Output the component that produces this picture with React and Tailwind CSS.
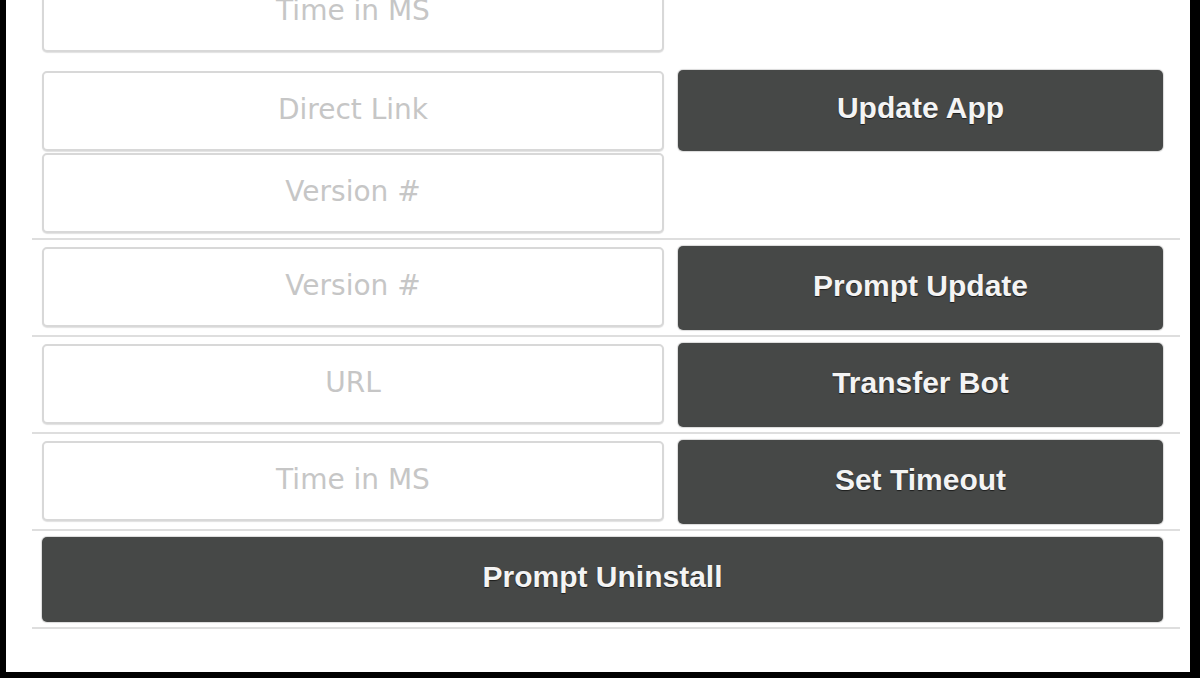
import { useState } from "react";

function Field({ placeholder, className = "" }) {
  const [value, setValue] = useState("");
  return (
    <input
      value={value}
      onChange={(e) => setValue(e.target.value)}
      placeholder={placeholder}
      className={
        "block h-[80px] w-[622px] shrink-0 rounded-[5px] border-2 border-[#d8d8d8] bg-white pb-[4px] text-center font-['DejaVu_Sans',sans-serif] text-[28px] text-[#555] shadow-[0_1px_1px_rgba(0,0,0,0.12)] outline-none placeholder:text-[#c6c6c6] " +
        className
      }
    />
  );
}

function ActionButton({ label, className = "" }) {
  return (
    <button
      className={
        "flex shrink-0 items-center justify-center rounded-[5px] bg-[#464847] pb-[6px] font-['Liberation_Sans',Arial,sans-serif] text-[30px] font-bold text-[#f4f4f4] shadow-[0_0_1px_1px_rgba(0,0,0,0.15)] [text-shadow:0_1px_1px_rgba(0,0,0,0.6)] " +
        className
      }
    >
      {label}
    </button>
  );
}

function Separator() {
  return <div className="h-[2px] w-full bg-[#dedede]" />;
}

function Row({ placeholder, label }) {
  return (
    <>
      <div className="flex items-start gap-[14px] pl-[10px] pr-[17px] pt-[6px] pb-[5px]">
        <Field placeholder={placeholder} className="mt-[1px]" />
        <ActionButton label={label} className="h-[84px] w-[485px]" />
      </div>
      <Separator />
    </>
  );
}

export default function App() {
  return (
    <div className="h-[678px] w-full bg-black pb-[6px] pl-[6px] pr-[10px]">
      <div className="h-full overflow-hidden bg-white pl-[26px] pr-[10px]">
        <div className="mt-[-28px] pl-[10px]">
          <Field placeholder="Time in MS" />
        </div>

        <div className="mt-[18px] flex items-start gap-[14px] pl-[10px] pr-[17px] pb-[5px]">
          <div className="flex shrink-0 flex-col gap-[2px] pt-[1px]">
            <Field placeholder="Direct Link" />
            <Field placeholder="Version #" />
          </div>
          <ActionButton label="Update App" className="h-[81px] w-[485px]" />
        </div>
        <Separator />

        <Row placeholder="Version #" label="Prompt Update" />
        <Row placeholder="URL" label="Transfer Bot" />
        <Row placeholder="Time in MS" label="Set Timeout" />

        <div className="pl-[10px] pr-[17px] pt-[6px] pb-[5px]">
          <ActionButton label="Prompt Uninstall" className="h-[85px] w-full" />
        </div>
        <Separator />
      </div>
    </div>
  );
}
